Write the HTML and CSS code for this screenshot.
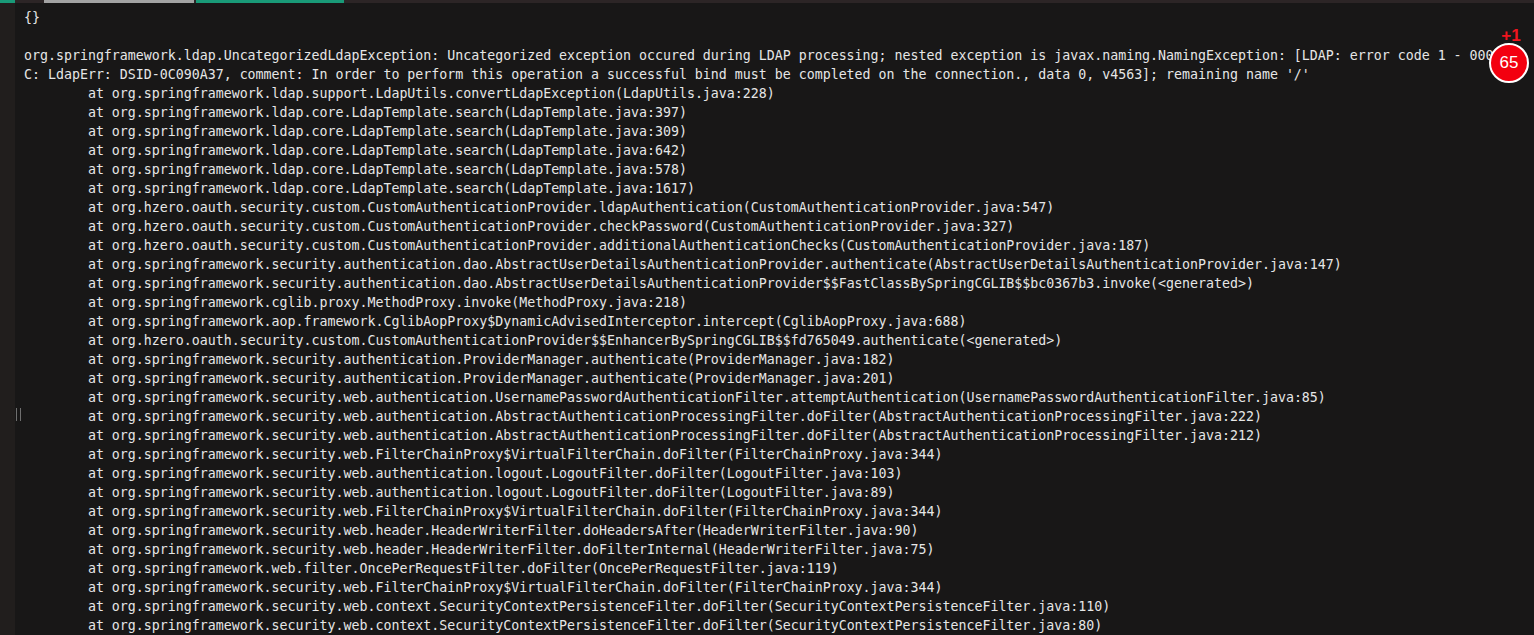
FILE: index.html
```html
<!DOCTYPE html>
<html>
<head>
<meta charset="utf-8">
<link rel="stylesheet" href="styles.css">
</head>
<body>
<div class="tabbar">
  <div class="tab tab-active-left"></div>
  <div class="tab tab-gap"></div>
  <div class="tab tab-grey"></div>
  <div class="tab tab-sep"></div>
  <div class="tab tab-teal"></div>
  <div class="tab tab-rest"></div>
</div>
<div class="main">
  <div class="gutter"><span class="grip"></span></div>
  <pre class="log">{}

org.springframework.ldap.UncategorizedLdapException: Uncategorized exception occured during LDAP processing; nested exception is javax.naming.NamingException: [LDAP: error code 1 - 000004DC: LdapErr: DSID-0C090A37, comment: In order to perform this operation a successful bind must be completed on the connection., data 0, v4563]; remaining name '/'
	at org.springframework.ldap.support.LdapUtils.convertLdapException(LdapUtils.java:228)
	at org.springframework.ldap.core.LdapTemplate.search(LdapTemplate.java:397)
	at org.springframework.ldap.core.LdapTemplate.search(LdapTemplate.java:309)
	at org.springframework.ldap.core.LdapTemplate.search(LdapTemplate.java:642)
	at org.springframework.ldap.core.LdapTemplate.search(LdapTemplate.java:578)
	at org.springframework.ldap.core.LdapTemplate.search(LdapTemplate.java:1617)
	at org.hzero.oauth.security.custom.CustomAuthenticationProvider.ldapAuthentication(CustomAuthenticationProvider.java:547)
	at org.hzero.oauth.security.custom.CustomAuthenticationProvider.checkPassword(CustomAuthenticationProvider.java:327)
	at org.hzero.oauth.security.custom.CustomAuthenticationProvider.additionalAuthenticationChecks(CustomAuthenticationProvider.java:187)
	at org.springframework.security.authentication.dao.AbstractUserDetailsAuthenticationProvider.authenticate(AbstractUserDetailsAuthenticationProvider.java:147)
	at org.springframework.security.authentication.dao.AbstractUserDetailsAuthenticationProvider$$FastClassBySpringCGLIB$$bc0367b3.invoke(&lt;generated&gt;)
	at org.springframework.cglib.proxy.MethodProxy.invoke(MethodProxy.java:218)
	at org.springframework.aop.framework.CglibAopProxy$DynamicAdvisedInterceptor.intercept(CglibAopProxy.java:688)
	at org.hzero.oauth.security.custom.CustomAuthenticationProvider$$EnhancerBySpringCGLIB$$fd765049.authenticate(&lt;generated&gt;)
	at org.springframework.security.authentication.ProviderManager.authenticate(ProviderManager.java:182)
	at org.springframework.security.authentication.ProviderManager.authenticate(ProviderManager.java:201)
	at org.springframework.security.web.authentication.UsernamePasswordAuthenticationFilter.attemptAuthentication(UsernamePasswordAuthenticationFilter.java:85)
	at org.springframework.security.web.authentication.AbstractAuthenticationProcessingFilter.doFilter(AbstractAuthenticationProcessingFilter.java:222)
	at org.springframework.security.web.authentication.AbstractAuthenticationProcessingFilter.doFilter(AbstractAuthenticationProcessingFilter.java:212)
	at org.springframework.security.web.FilterChainProxy$VirtualFilterChain.doFilter(FilterChainProxy.java:344)
	at org.springframework.security.web.authentication.logout.LogoutFilter.doFilter(LogoutFilter.java:103)
	at org.springframework.security.web.authentication.logout.LogoutFilter.doFilter(LogoutFilter.java:89)
	at org.springframework.security.web.FilterChainProxy$VirtualFilterChain.doFilter(FilterChainProxy.java:344)
	at org.springframework.security.web.header.HeaderWriterFilter.doHeadersAfter(HeaderWriterFilter.java:90)
	at org.springframework.security.web.header.HeaderWriterFilter.doFilterInternal(HeaderWriterFilter.java:75)
	at org.springframework.web.filter.OncePerRequestFilter.doFilter(OncePerRequestFilter.java:119)
	at org.springframework.security.web.FilterChainProxy$VirtualFilterChain.doFilter(FilterChainProxy.java:344)
	at org.springframework.security.web.context.SecurityContextPersistenceFilter.doFilter(SecurityContextPersistenceFilter.java:110)
	at org.springframework.security.web.context.SecurityContextPersistenceFilter.doFilter(SecurityContextPersistenceFilter.java:80)
	at org.springframework.security.web.session.SessionManagementFilter.doFilter(SessionManagementFilter.java:125)</pre>
  <div class="badge">
    <span class="badge-plus">+1</span>
    <span class="badge-count">65</span>
  </div>
</div>
</body>
</html>
```
FILE: styles.css
```css
html, body {
  margin: 0;
  padding: 0;
  background: #181717;
  overflow: hidden;
  height: 635px;
}

.tabbar {
  display: flex;
  height: 3px;
}

.tab { height: 3px; }
.tab-active-left { width: 15px; background: #199a78; }
.tab-gap { width: 29px; background: #2c2526; }
.tab-grey { width: 150px; background: #a3a3a3; }
.tab-sep { width: 2px; background: #2c2526; }
.tab-teal { width: 148px; background: #199a78; }
.tab-rest { flex: 1; background: #2c2526; }

.main {
  position: relative;
  display: flex;
  height: 632px;
}

.gutter {
  width: 15px;
  flex: none;
  background: #211e1d;
  position: relative;
}

.grip {
  position: absolute;
  left: 16px;
  top: 405px;
  width: 5px;
  height: 13px;
  border-left: 1px solid #6f6f6f;
  border-right: 1px solid #6f6f6f;
  box-sizing: border-box;
}

.log {
  flex: 1;
  margin: 0;
  padding: 5px 0 0 9px;
  font-family: "DejaVu Sans Mono", "Liberation Mono", monospace;
  font-size: 13.28px;
  line-height: 19px;
  color: #e6e6e6;
  white-space: pre-wrap;
  word-break: break-all;
  tab-size: 8;
  -moz-tab-size: 8;
}

.badge {
  position: absolute;
  left: 1488px;
  top: 26px;
  width: 42px;
  display: flex;
  flex-direction: column;
  align-items: center;
}

.badge-plus {
  font-family: "Liberation Sans", Arial, sans-serif;
  font-weight: bold;
  font-size: 17px;
  line-height: 14px;
  color: #f0141e;
  margin-left: 4px;
}

.badge-count {
  width: 36px;
  height: 36px;
  border: 2px solid #ffffff;
  border-radius: 50%;
  background: #f3000f;
  color: #ffffff;
  font-family: "Liberation Sans", Arial, sans-serif;
  font-size: 17px;
  display: flex;
  align-items: center;
  justify-content: center;
}
```
